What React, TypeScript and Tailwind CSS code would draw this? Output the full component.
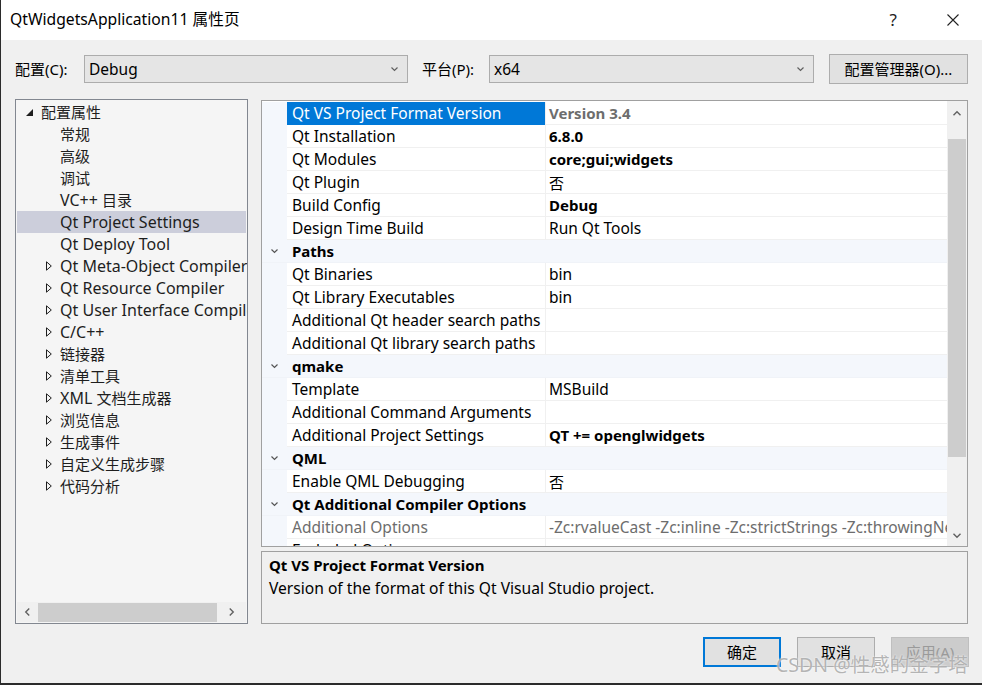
import React from 'react';

type PropRow =
  | { kind: 'cat'; name: string }
  | { kind: 'row'; name: string; value?: string; bold?: boolean; dim?: boolean; sel?: boolean };

const rows: PropRow[] = [
  { kind: 'row', name: 'Qt VS Project Format Version', value: 'Version 3.4', bold: true, dim: true, sel: true },
  { kind: 'row', name: 'Qt Installation', value: '6.8.0', bold: true },
  { kind: 'row', name: 'Qt Modules', value: 'core;gui;widgets', bold: true },
  { kind: 'row', name: 'Qt Plugin', value: '否' },
  { kind: 'row', name: 'Build Config', value: 'Debug', bold: true },
  { kind: 'row', name: 'Design Time Build', value: 'Run Qt Tools' },
  { kind: 'cat', name: 'Paths' },
  { kind: 'row', name: 'Qt Binaries', value: 'bin' },
  { kind: 'row', name: 'Qt Library Executables', value: 'bin' },
  { kind: 'row', name: 'Additional Qt header search paths' },
  { kind: 'row', name: 'Additional Qt library search paths' },
  { kind: 'cat', name: 'qmake' },
  { kind: 'row', name: 'Template', value: 'MSBuild' },
  { kind: 'row', name: 'Additional Command Arguments' },
  { kind: 'row', name: 'Additional Project Settings', value: 'QT += openglwidgets', bold: true },
  { kind: 'cat', name: 'QML' },
  { kind: 'row', name: 'Enable QML Debugging', value: '否' },
  { kind: 'cat', name: 'Qt Additional Compiler Options' },
  { kind: 'row', name: 'Additional Options', value: '-Zc:rvalueCast -Zc:inline -Zc:strictStrings -Zc:throwingNew', dim: true },
  { kind: 'row', name: 'Excluded Options' },
];

type TreeItem = { label: string; level: 0 | 1; state: 'open' | 'closed' | 'leaf'; sel?: boolean };

const tree: TreeItem[] = [
  { label: '配置属性', level: 0, state: 'open' },
  { label: '常规', level: 1, state: 'leaf' },
  { label: '高级', level: 1, state: 'leaf' },
  { label: '调试', level: 1, state: 'leaf' },
  { label: 'VC++ 目录', level: 1, state: 'leaf' },
  { label: 'Qt Project Settings', level: 1, state: 'leaf', sel: true },
  { label: 'Qt Deploy Tool', level: 1, state: 'leaf' },
  { label: 'Qt Meta-Object Compiler', level: 1, state: 'closed' },
  { label: 'Qt Resource Compiler', level: 1, state: 'closed' },
  { label: 'Qt User Interface Compiler', level: 1, state: 'closed' },
  { label: 'C/C++', level: 1, state: 'closed' },
  { label: '链接器', level: 1, state: 'closed' },
  { label: '清单工具', level: 1, state: 'closed' },
  { label: 'XML 文档生成器', level: 1, state: 'closed' },
  { label: '浏览信息', level: 1, state: 'closed' },
  { label: '生成事件', level: 1, state: 'closed' },
  { label: '自定义生成步骤', level: 1, state: 'closed' },
  { label: '代码分析', level: 1, state: 'closed' },
];

// CJK glyphs run a little larger than the Latin ones in the original UI font,
// so Latin text is bumped up and CJK runs are kept at 15px.
const Mixed = ({ text }: { text: string }) => (
  <>
    {text.split(/([\u3000-\u9fff]+)/).map((p, i) =>
      /[\u3000-\u9fff]/.test(p) ? (
        <span key={i} className="text-[15px]">
          {p}
        </span>
      ) : (
        <React.Fragment key={i}>{p}</React.Fragment>
      )
    )}
  </>
);

const Chevron = ({ dir, className }: { dir: 'up' | 'down' | 'left' | 'right'; className?: string }) => {
  const d = {
    up: 'M1 6 L5 2 L9 6',
    down: 'M1 2 L5 6 L9 2',
    left: 'M6 1 L2 5 L6 9',
    right: 'M2 1 L6 5 L2 9',
  }[dir];
  const box = dir === 'up' || dir === 'down' ? '0 0 10 8' : '0 0 8 10';
  return (
    <svg viewBox={box} className={className} fill="none" stroke="currentColor" strokeWidth="1.6">
      <path d={d} />
    </svg>
  );
};

const Combo = ({ value, width }: { value: string; width: string }) => (
  <div className={`${width} h-[28px] bg-[#e5e5e5] border border-[#acacac] flex items-center pl-[4px] pr-[8px]`}>
    <span className="flex-1 text-[15.5px] text-[#000] pt-[1px]">{value}</span>
    <Chevron dir="down" className="w-[9px] h-[6px] text-[#606060]" />
  </div>
);

const TreePanel = () => (
  <div className="w-[233px] h-[525px] border border-[#828790] bg-[#f5f5f5] flex flex-col">
    <div className="flex-1 pt-[1px] overflow-hidden">
      {tree.map((t) => (
        <div
          key={t.label}
          className={`h-[22px] flex items-center mx-[1px] whitespace-nowrap text-[16px] text-[#1e1e1e] ${t.sel ? 'bg-[#cccedb]' : ''}`}
        >
          {t.level === 0 ? (
            <>
              <svg viewBox="0 0 7 7" className="w-[7px] h-[7px] ml-[9px] mr-[8px] shrink-0">
                <path d="M7 0 L7 7 L0 7 Z" fill="#1e1e1e" />
              </svg>
              <span>
                <Mixed text={t.label} />
              </span>
            </>
          ) : (
            <>
              <div className="w-[43px] shrink-0 flex justify-end pr-[8px]">
                {t.state === 'closed' && (
                  <svg viewBox="0 0 6 10" className="w-[6px] h-[10px]">
                    <path d="M0.5 0.8 L5.3 5 L0.5 9.2 Z" fill="none" stroke="#1e1e1e" strokeWidth="1" />
                  </svg>
                )}
              </div>
              <span>
                <Mixed text={t.label} />
              </span>
            </>
          )}
        </div>
      ))}
    </div>
    <div className="h-[20px] bg-[#f0f0f0] flex items-center mb-[1px] mx-[1px]">
      <div className="w-[21px] flex justify-center">
        <Chevron dir="left" className="w-[7px] h-[10px] text-[#606060]" />
      </div>
      <div className="w-[179px] h-[19px] bg-[#cdcdcd]" />
      <div className="flex-1 flex justify-center">
        <Chevron dir="right" className="w-[7px] h-[10px] text-[#606060]" />
      </div>
    </div>
  </div>
);

const PropertyGrid = () => (
  <div className="h-[447px] border border-[#a0a0a0] bg-white flex">
    <div className="flex-1 pt-[1px] overflow-hidden">
      {rows.map((r) =>
        r.kind === 'cat' ? (
          <div key={r.name} className="h-[23px] flex items-center bg-[#f4f7fc] border-b border-[#f0f3f8]">
            <div className="w-[25px] flex justify-center">
              <Chevron dir="down" className="w-[9px] h-[6px] text-[#555]" />
            </div>
            <span className="pl-[5px] pt-[1px] font-bold text-[15px] text-[#000]">{r.name}</span>
          </div>
        ) : (
          <div key={r.name} className="h-[23px] flex">
            <div className="w-[25px] bg-[#f4f7fc]" />
            <div
              className={`w-[258px] pl-[5px] pt-[2px] flex items-center border-b whitespace-nowrap overflow-hidden text-[15.5px] ${
                r.sel ? 'bg-[#0078d7] text-white border-[#0078d7]' : 'border-[#f0f0f0]'
              } ${r.dim && !r.sel ? 'text-[#6d6d6d]' : r.sel ? '' : 'text-[#000]'}`}
            >
              {r.name}
            </div>
            <div
              className={`flex-1 pl-[3px] flex items-center border-b border-l border-[#f0f0f0] whitespace-nowrap overflow-hidden ${
                r.bold ? 'font-bold text-[15px] pt-[1px]' : 'text-[15.5px] pt-[2px]'
              } ${r.dim ? 'text-[#6d6d6d]' : 'text-[#000]'}`}
            >
              {r.value && <Mixed text={r.value} />}
            </div>
          </div>
        )
      )}
    </div>
    <div className="w-[20px] bg-[#f0f0f0] flex flex-col items-center">
      <div className="h-[24px] flex items-center">
        <Chevron dir="up" className="w-[10px] h-[7px] text-[#606060]" />
      </div>
      <div className="mt-[14px] w-[18px] h-[318px] bg-[#cdcdcd]" />
      <div className="flex-1" />
      <div className="h-[22px] flex items-center">
        <Chevron dir="down" className="w-[10px] h-[7px] text-[#606060]" />
      </div>
    </div>
  </div>
);

export default function App() {
  return (
    <div className="w-[982px] h-[685px] bg-[#f0f0f0] border-l border-b-2 border-[#2b2b2b] flex flex-col relative overflow-hidden font-['Noto_Sans','Noto_Sans_CJK_SC',sans-serif] text-[15px] text-black">
      {/* title bar */}
      <div className="h-[40px] bg-white flex items-center pl-[9px] shrink-0">
        <span className="flex-1 text-[15.7px]">QtWidgetsApplication11 属性页</span>
        <span className="text-[17px] mr-[50px] text-[#222]">?</span>
        <svg viewBox="0 0 12 12" className="w-[12px] h-[12px] mr-[23px]">
          <path d="M0.5 0.5 L11.5 11.5 M11.5 0.5 L0.5 11.5" stroke="#222" strokeWidth="1.1" />
        </svg>
      </div>

      {/* configuration row */}
      <div className="flex items-center pl-[14px] pt-[14px] h-[44px] shrink-0">
        <span className="w-[69px]">配置(C):</span>
        <Combo value="Debug" width="w-[324px]" />
        <span className="w-[67px] ml-[14px]">平台(P):</span>
        <Combo value="x64" width="w-[325px]" />
        <button className="ml-[15px] w-[139px] h-[30px] bg-[#e1e1e1] border border-[#adadad] text-[15px]">
          配置管理器(O)...
        </button>
      </div>

      {/* main */}
      <div className="flex pl-[14px] pt-[15px] shrink-0">
        <TreePanel />
        <div className="ml-[13px] w-[707px] pt-[1px] flex flex-col">
          <PropertyGrid />
          <div className="mt-[4px] h-[73px] border border-[#a0a0a0] bg-[#f0f0f0] pl-[7px] pt-[2px] leading-[23px]">
            <div className="font-bold text-[15px]">Qt VS Project Format Version</div>
            <div className="text-[15.6px]">Version of the format of this Qt Visual Studio project.</div>
          </div>
        </div>
      </div>

      {/* buttons */}
      <div className="flex justify-end gap-[16px] pr-[13px] pt-[13px]">
        <button className="w-[78px] h-[30px] bg-[#e1e1e1] border-2 border-[#0078d7] text-[15px]">确定</button>
        <button className="w-[78px] h-[30px] bg-[#e1e1e1] border border-[#adadad] text-[15px]">取消</button>
        <button className="w-[78px] h-[30px] bg-[#cccccc] border border-[#bfbfbf] text-[15px] text-[#9a9a9a]">应用(A)</button>
      </div>

      {/* watermark */}
      <div className="absolute left-[775px] top-[650px] text-[19.5px] text-[#a8a8a8]/85 whitespace-nowrap [text-shadow:0_0_2px_#ffffff]">
        CSDN @性感的金字塔
      </div>
    </div>
  );
}
